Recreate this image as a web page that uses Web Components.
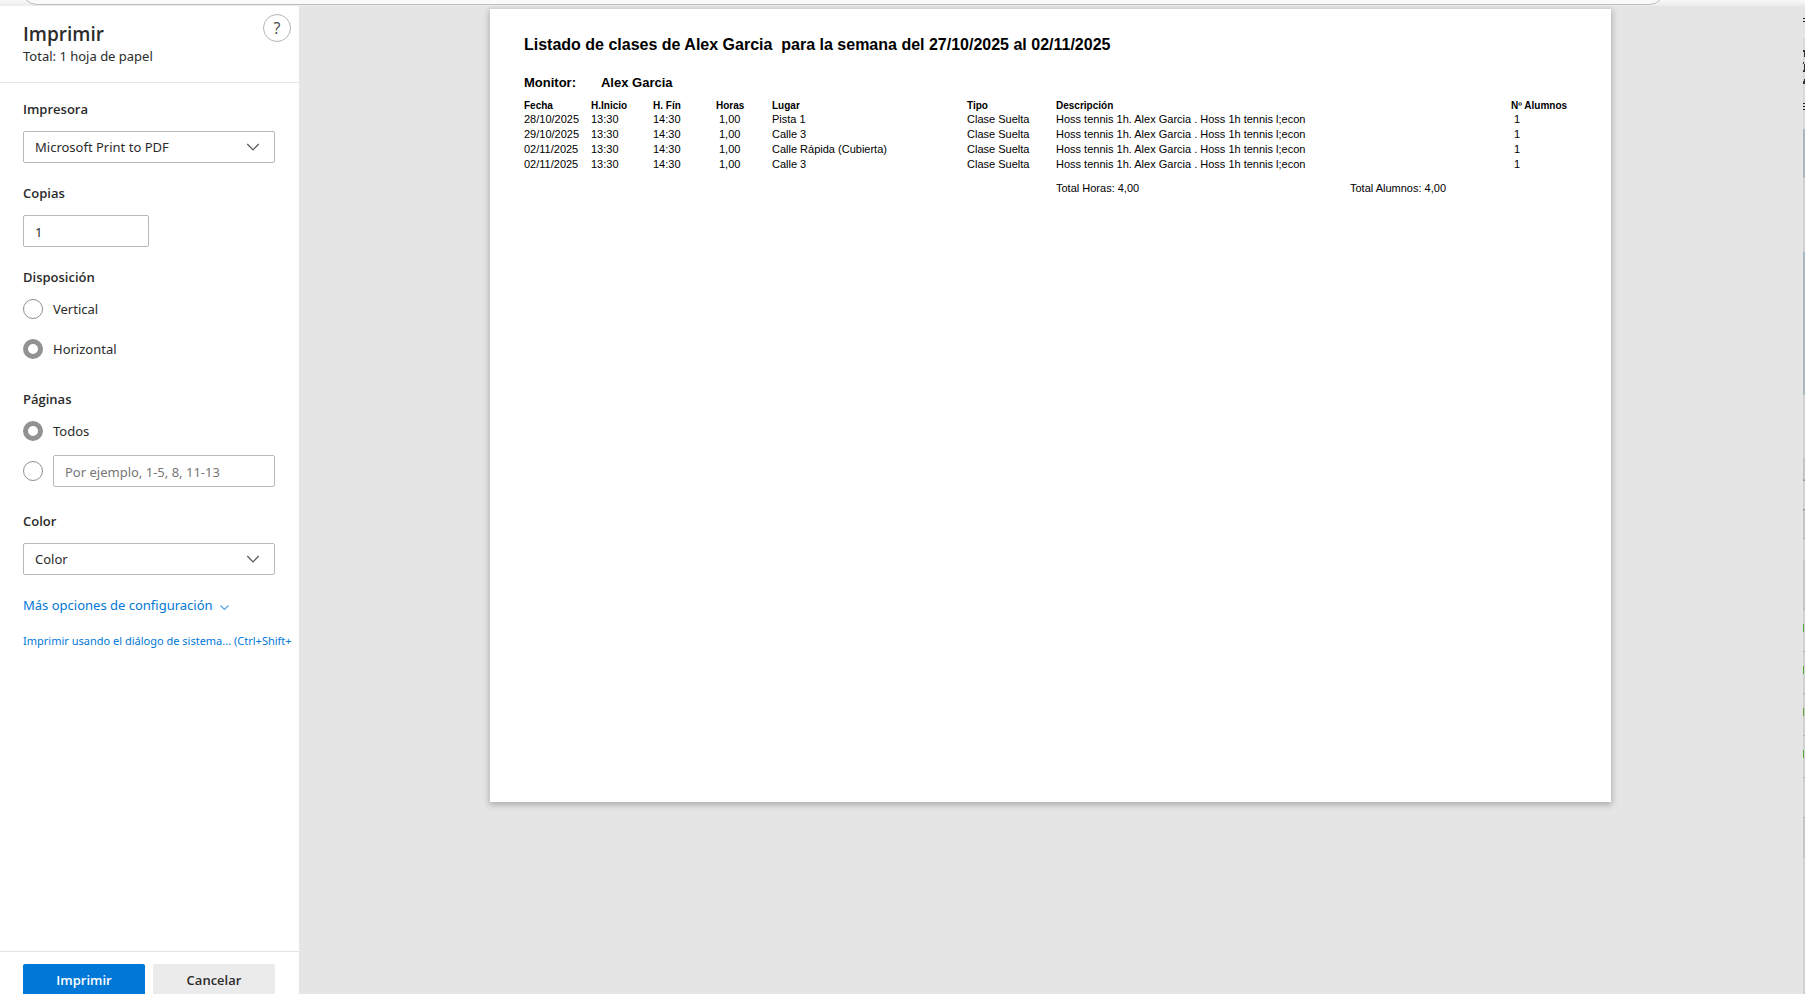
<!DOCTYPE html>
<html lang="es">
<head>
<meta charset="utf-8">
<title>Imprimir</title>
<style>
html,body{margin:0;height:100%;overflow:hidden}
body{font:13px/20px "Noto Sans","Open Sans",sans-serif;color:#2b2b2b;background:#f7f7f7}
</style>
</head>
<body>
<print-app></print-app>
<script>
function define(name, html){
  customElements.define(name, class extends HTMLElement{
    constructor(){
      super();
      const t=document.createElement('template');
      t.innerHTML=html;
      this.attachShadow({mode:'open'}).append(t.content.cloneNode(true));
    }
  });
}

define('browser-edge', `
<style>
:host{display:block;height:6px;flex:none;overflow:hidden;background:linear-gradient(#f8f8f8,#ebebeb)}
.pill{height:32px;margin:-27px 140px 0 21px;border:1px solid #bdbdbd;border-radius:16px;background:#fafafa;box-sizing:border-box}
</style><div class="pill"></div>`);

define('page-sliver', `
<style>:host{display:block;width:2px;flex:none;overflow:hidden;background:#d1d1d1}svg{display:block}</style>
<svg width="2" height="988" viewBox="0 6 2 988" shape-rendering="crispEdges" aria-hidden="true">
<rect y="6" width="2" height="32" fill="#e4e4e4"/><rect y="38" width="2" height="91" fill="#d9d9d9"/>
<path d="M0 18h2v1H0zM0 21h2v1H0zM0 103h2v1H0zM0 106h2v1H0zM0 109h2v1H0z" fill="#222"/>
<path d="M0 50h2v7H1v-5H0zM0 62h1v2h1v8H0v-2h1v-6H0zM1 79h1v5H0v-3h1z" fill="#333"/>
<rect y="129" width="2" height="49" fill="#a9b7c1"/><rect y="252" width="2" height="143" fill="#a9b7c1"/>
<rect y="458" width="2" height="22" fill="#c5c5c5"/><rect y="510" width="2" height="28" fill="#c5c5c5"/>
<path d="M0 479h1v1h1v1H0zM0 509h2v1H1v1H0z" fill="#999"/>
<rect y="560" width="2" height="49" fill="#c7c7c7"/><rect y="817" width="2" height="41" fill="#c6c6c6"/>
<path d="M0 538h2v1H0zM0 609h2v1H0zM0 651h2v1H0zM0 693h2v1H0zM0 735h2v1H0zM0 777h2v1H0zM0 817h2v1H0z" fill="#b5b5b5"/>
<path d="M0 624h1v8H0zM0 666h1v8H0zM0 708h1v8H0zM0 750h1v8H0z" fill="#55a83a"/>
</svg>`);

define('form-section', `
<style>
:host{display:flex;flex-direction:column;gap:12px}
:host([tight]){gap:2px}
.h{font-family:"Open Sans",sans-serif;font-weight:600}
</style><div class="h"><slot name="label"></slot></div><div><slot></slot></div>`);

customElements.define('drop-down', class extends HTMLElement{
  constructor(){
    super();
    const v=this.getAttribute('value'), l=this.getAttribute('label');
    this.attachShadow({mode:'open'}).innerHTML=`
<style>
:host{display:grid;align-items:center}
select{grid-area:1/1;appearance:none;box-sizing:border-box;width:100%;height:32px;padding:0 36px 0 11px;border:1px solid #b8b8b8;border-radius:2px;background:#fff;font:inherit;color:inherit}
svg{grid-area:1/1;justify-self:end;margin-right:15px;pointer-events:none}
</style>
<select aria-label="${l}"><option>${v}</option></select>
<svg width="14" height="10" viewBox="0 0 14 10" fill="none" stroke="#555" stroke-width="1.2" aria-hidden="true"><path d="M1.3 2 7 7.8 12.7 2"/></svg>`;
  }
});

customElements.define('text-field', class extends HTMLElement{
  constructor(){
    super();
    const g=a=>this.getAttribute(a)||'';
    this.attachShadow({mode:'open'}).innerHTML=`
<style>
:host{display:block}
input{box-sizing:border-box;width:100%;height:32px;padding:1px 11px 0;border:1px solid #b8b8b8;border-radius:2px;background:#fff;font:inherit;color:inherit;display:block}
input::placeholder{color:#767676;opacity:1}
</style><input type="text" aria-label="${g('label')}" value="${g('value')}" placeholder="${g('placeholder')}">`;
  }
});

customElements.define('radio-row', class extends HTMLElement{
  constructor(){
    super();
    const l=this.getAttribute('label');
    this.attachShadow({mode:'open'}).innerHTML=`
<style>
:host{display:flex;align-items:center;gap:10px;height:40px}
input{appearance:none;flex:none;box-sizing:border-box;width:20px;height:20px;margin:0;border:1px solid #8f8f8f;border-radius:50%;background:#fff}
input:checked{border:5px solid #929292}
::slotted(*){flex:1}
</style><input id="r" type="radio" ${this.hasAttribute('checked')?'checked':''} ${l?'':'aria-label="Intervalo de páginas"'}>${l?`<label for="r">${l}</label>`:''}<slot></slot>`;
  }
});

define('print-panel', `
<style>
:host{display:flex;flex-direction:column;width:299px;flex:none;background:#fff;overflow:hidden}
header{display:flex;justify-content:space-between;box-sizing:border-box;height:77px;padding:8px 8px 0 23px;border-bottom:1px solid #e4e4e4;flex:none}
h1{margin:7px 0 0;font:600 19px/26px "Open Sans",sans-serif}
p{margin:-1px 0 0}
.help{width:28px;height:28px;padding:0;border:1px solid #b5b5b5;border-radius:50%;background:#fff;font:16px/26px "Open Sans",sans-serif;color:#444}
main{flex:1;display:flex;flex-direction:column;gap:20px;padding:16px 24px 0 23px;min-height:0}
text-field.short{width:126px}
a{color:#0078d7;text-decoration:none;white-space:nowrap}
.more svg{margin-left:7px;vertical-align:-3px}
.sys{font-size:11px;margin-top:-4px}
footer{flex:none;display:grid;grid-template-columns:1fr 1fr;gap:8px;padding:12px 24px 0 23px;border-top:1px solid #e4e4e4;height:30px}
footer button{height:32px;border:0;border-radius:2px;font:600 13px/20px "Open Sans",sans-serif;padding:0;background:#ebebeb;color:#2b2b2b}
footer .go{background:#0078d7;color:#fff}
</style>
<header><div><h1>Imprimir</h1><p>Total: 1 hoja de papel</p></div><button class="help" aria-label="Ayuda">?</button></header>
<main>
<form-section><span slot="label">Impresora</span><drop-down label="Impresora" value="Microsoft Print to PDF"></drop-down></form-section>
<form-section><span slot="label">Copias</span><text-field class="short" label="Copias" value="1"></text-field></form-section>
<form-section tight><span slot="label">Disposición</span><radio-row label="Vertical"></radio-row><radio-row label="Horizontal" checked></radio-row></form-section>
<form-section tight><span slot="label">Páginas</span><radio-row label="Todos" checked></radio-row><radio-row><text-field label="Páginas" placeholder="Por ejemplo, 1-5, 8, 11-13"></text-field></radio-row></form-section>
<form-section><span slot="label">Color</span><drop-down label="Color" value="Color"></drop-down></form-section>
<a class="more" href="#">Más opciones de configuración<svg width="9" height="10" viewBox="0 0 9 10" fill="none" stroke="#4ea1e3" stroke-width="1.1" aria-hidden="true"><path d="M.5 2.5 4.5 6.5 8.5 2.5"/></svg></a>
<a class="sys" href="#">Imprimir usando el diálogo de sistema... (Ctrl+Shift+</a>
</main>
<footer><button class="go">Imprimir</button><button>Cancelar</button></footer>`);

const row=(d,p)=>`<tr><td>${d}</td><td>13:30</td><td>14:30</td><td class="in">1,00</td><td>${p}</td><td>Clase Suelta</td><td colspan="2">Hoss tennis 1h. Alex Garcia . Hoss 1h tennis l;econ</td><td class="in">1</td></tr>`;
define('report-sheet', `
<style>
:host{display:block;box-sizing:border-box;aspect-ratio:1121/793;padding:24px 34px;background:#fff;color:#000;box-shadow:0 2px 6px 1px rgba(0,0,0,.24);font:11px/15px "Liberation Sans",Arial,sans-serif}
h2{margin:0 0 17px;font-size:16px;line-height:24px;white-space:pre}
.mon{display:flex;gap:25px;font-weight:700;font-size:13px;line-height:18px;margin-bottom:7px}
table{width:100%;table-layout:fixed;border-collapse:collapse}
th,td{padding:0;text-align:left;white-space:nowrap}
th{font-size:10px;line-height:13px}
td.in{padding-left:3px}
tfoot td{padding-top:9px}
</style>
<h2>Listado de clases de Alex Garcia  para la semana del 27/10/2025 al 02/11/2025</h2>
<div class="mon"><span>Monitor:</span><span>Alex Garcia</span></div>
<table>
<colgroup><col style="width:67px"><col style="width:62px"><col style="width:63px"><col style="width:56px"><col style="width:195px"><col style="width:89px"><col><col style="width:161px"><col style="width:66px"></colgroup>
<thead><tr><th>Fecha</th><th>H.Inicio</th><th>H. Fín</th><th>Horas</th><th>Lugar</th><th>Tipo</th><th colspan="2">Descripción</th><th>Nº Alumnos</th></tr></thead>
<tbody>${row('28/10/2025','Pista 1')}${row('29/10/2025','Calle 3')}${row('02/11/2025','Calle Rápida (Cubierta)')}${row('02/11/2025','Calle 3')}</tbody>
<tfoot><tr><td colspan="6"></td><td>Total Horas: 4,00</td><td colspan="2">Total Alumnos: 4,00</td></tr></tfoot>
</table>`);

define('print-app', `
<style>
:host{display:flex;flex-direction:column;height:100vh;overflow:hidden}
.dialog{flex:1;display:flex;min-height:0}
.preview{flex:1;min-width:0;background:#e5e5e5;padding:3px 192px 0 191px;overflow:hidden}
</style>
<browser-edge></browser-edge>
<div class="dialog"><print-panel></print-panel><div class="preview"><report-sheet></report-sheet></div><page-sliver></page-sliver></div>`);
</script>
</body>
</html>
